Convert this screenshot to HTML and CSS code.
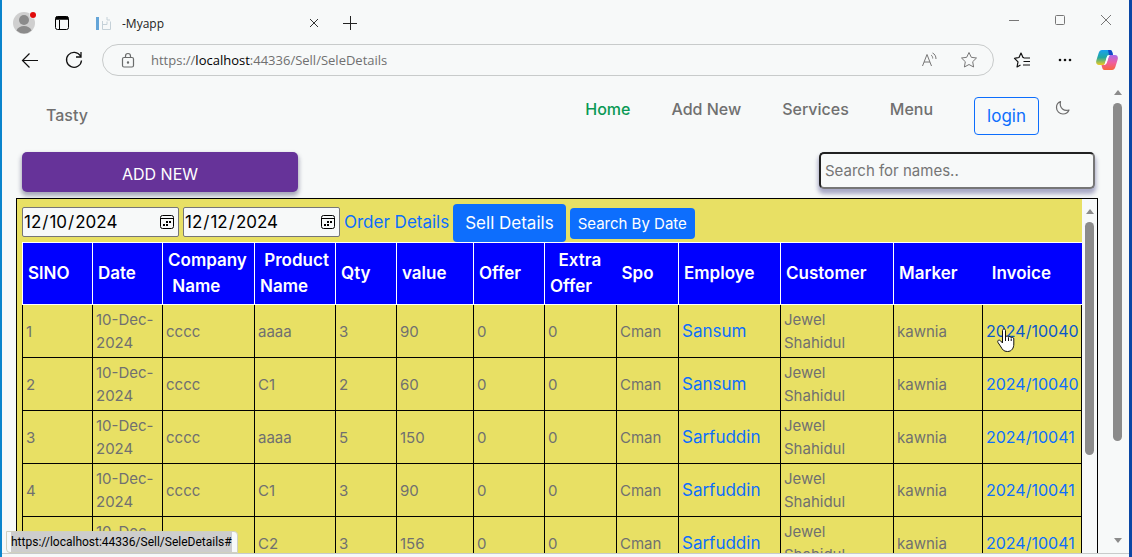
FILE: index.html
```html
<!DOCTYPE html>
<html lang="en">
<head>
    <meta charset="UTF-8">
    <meta name="viewport" content="width=device-width, initial-scale=1.0">
    <title>-Myapp</title>
    <link rel="stylesheet" href="styles.css">
</head>
<body>
    <div class="window">
        <!-- Tab strip -->
        <div class="tab-strip">
            <button class="icon-btn avatar" aria-label="Profile">
                <svg width="24" height="24" viewBox="0 0 24 24">
                    <circle cx="11" cy="13" r="11" fill="#cfcfcf"/>
                    <circle cx="11" cy="10" r="5" fill="#8b8b8b"/>
                    <path d="M3.5 20.5C4.500 17.500 7.500 16 11 16s6.500 1.500 7.500 4.500A11 11 0 0 1 3.500 20.500z" fill="#8b8b8b"/>
                    <circle cx="20" cy="5" r="3.500" fill="#f7f8f8"/>
                    <circle cx="20" cy="5" r="3" fill="#e00b0b"/>
                </svg>
            </button>
            <button class="icon-btn workspaces" aria-label="Tab actions">
                <svg width="16" height="16" viewBox="0 0 16 16" fill="none" stroke="#000">
                    <rect x="1.500" y="1.500" width="13" height="13" rx="2"/>
                    <path d="M1.500 4h13M5.500 5v9.500"/>
                    <path d="M2 3h12" stroke-width="3"/>
                </svg>
            </button>
            <div class="tab">
                <svg width="16" height="16" viewBox="0 0 16 16">
                    <rect x="0" y="2" width="3" height="13" fill="#64a5d8"/>
                    <path d="M6.500 6v8.500h8V6.500M7 9.500h4v-3M11 2v3h3" fill="none" stroke="#c5d1d8"/>
                </svg>
                <span class="tab-title">-Myapp</span>
                <button class="icon-btn" aria-label="Close tab">
                    <svg width="10" height="10" viewBox="0 0 10 10" fill="none" stroke="#333">
                        <path d="M1 1l8 8M9 1l-8 8"/>
                    </svg>
                </button>
            </div>
            <button class="icon-btn new-tab" aria-label="New tab">
                <svg width="14" height="14" viewBox="0 0 14 14" fill="none" stroke="#222">
                    <path d="M7.500 0v14M0 7.500h14"/>
                </svg>
            </button>
            <div class="window-controls">
                <button class="icon-btn" aria-label="Minimize">
                    <svg width="12" height="12" viewBox="0 0 12 12" stroke="#777"><path d="M1 6.500h10"/></svg>
                </button>
                <button class="icon-btn" aria-label="Maximize">
                    <svg width="12" height="12" viewBox="0 0 12 12" fill="none" stroke="#777"><rect x="1.500" y="1.500" width="9" height="9" rx="1"/></svg>
                </button>
                <button class="icon-btn" aria-label="Close">
                    <svg width="12" height="12" viewBox="0 0 12 12" stroke="#777"><path d="M1 1l10 10M11 1L1 11"/></svg>
                </button>
            </div>
        </div>

        <!-- Toolbar -->
        <div class="toolbar">
            <button class="icon-btn" aria-label="Back">
                <svg width="18" height="18" viewBox="0 0 18 18" fill="none" stroke="#111" stroke-width="1.200">
                    <path d="M17 9.500H2M8.500 2.500L1.500 9.500l7 7"/>
                </svg>
            </button>
            <button class="icon-btn refresh" aria-label="Refresh">
                <svg width="18" height="18" viewBox="0 0 18 18" fill="none" stroke="#111" stroke-width="1.300">
                    <path d="M15.500 5A7.500 7.500 0 1 0 16.500 9.500M16 1v5h-5"/>
                </svg>
            </button>
            <div class="address-bar">
                <svg width="14" height="16" viewBox="0 0 14 16" fill="none" stroke="#6a6c6c" stroke-width="1.200">
                    <rect x="1.500" y="5.500" width="11" height="9.500" rx="1.500"/>
                    <path d="M4.500 5.500V4a2.500 2.500 0 0 1 5 0v1.500"/>
                    <circle cx="7" cy="10.500" r=".6" fill="#6a6c6c"/>
                </svg>
                <span class="url">https://<b>localhost</b>:44336/Sell/SeleDetails</span>
                <button class="icon-btn" aria-label="Read aloud">
                    <svg width="17" height="16" viewBox="0 0 17 16" fill="none" stroke="#777">
                        <path d="M1.500 14L6 2.500 10.500 14M3 10h6M10 3c1.200.8 1.700 1.800 1.700 3.500M11.500 1c2.200 1 3.500 3 3.500 6"/>
                    </svg>
                </button>
                <button class="icon-btn" aria-label="Add to favorites">
                    <svg width="18" height="18" viewBox="0 0 18 18" fill="none" stroke="#777" stroke-linejoin="round">
                        <path d="M9 1.500l2.300 4.800 5.200.7-3.800 3.700.9 5.300L9 13.500 4.400 16l.9-5.300L1.500 7l5.200-.7z"/>
                    </svg>
                </button>
            </div>
            <button class="icon-btn favorites" aria-label="Favorites">
                <svg width="18" height="18" viewBox="0 0 18 18" fill="none" stroke="#111" stroke-width="1.200" stroke-linejoin="round">
                    <path d="M11 6.500H10L8 2 6 6.500l-4.500.8L5 10.800 4 16l3.500-2M10.500 7h6.500M10.500 10.500H17M10 14h7"/>
                </svg>
            </button>
            <button class="icon-btn" aria-label="Settings and more">
                <svg width="16" height="16" viewBox="0 0 16 16" fill="#111">
                    <circle cx="3" cy="8" r="1.300"/><circle cx="8" cy="8" r="1.300"/><circle cx="13" cy="8" r="1.300"/>
                </svg>
            </button>
            <button class="icon-btn copilot" aria-label="Copilot">
                <svg width="22" height="20" viewBox="0 0 22 20">
                    <defs>
                        <linearGradient id="cool" x1="0" y1="0" x2="0" y2="1">
                            <stop offset="0" stop-color="#18a0f0"/><stop offset=".5" stop-color="#22a8a0"/><stop offset="1" stop-color="#f2cb1d"/>
                        </linearGradient>
                        <linearGradient id="warm" x1="0" y1="0" x2="0" y2="1">
                            <stop offset="0" stop-color="#a86bea"/><stop offset=".5" stop-color="#ef5fa0"/><stop offset="1" stop-color="#f9663c"/>
                        </linearGradient>
                    </defs>
                    <path d="M6 0h8c1.500 0 2 1 2.500 3l.5 2h-3c-2 0-3 1-3.500 3l-1.500 5c-.5 1.500-1 2-2.500 2H3c-2.500 0-3.500-2-2.500-5l2-6.500C3.200 1.200 4 0 6 0z" fill="url(#cool)"/>
                    <path d="M12 0h2c1.500 0 2 1 2.500 3l.5 2h-4z" fill="#1448c8"/>
                    <path d="M16 20H8.500C7 20 6.500 19 6 17l-.5-2h2c2 0 3-1 3.500-3l1.500-5c.5-1.500 1-2 2.500-2h4c2.500 0 3.500 2 2.500 5l-2 6.500c-.700 2.300-1.500 3.500-3.500 3.500z" fill="url(#warm)"/>
                    <path d="M11.500 5.500h2.500c-1 .5-1.200 1-1.500 2L11 12c-.5 1.500-1.200 2.500-3 2.700 1-.5 1-1 1.300-1.900l1.400-5c.2-.8.400-1.700.8-2.300z" fill="#fff"/>
                </svg>
            </button>
        </div>

        <!-- Web page -->
        <div class="viewport">
            <div class="page">
                <header class="navbar">
                    <a href="#" class="brand">Tasty</a>
                    <nav class="nav-links">
                        <a href="#" class="active">Home</a>
                        <a href="#">Add New</a>
                        <a href="#">Services</a>
                        <a href="#">Menu</a>
                        <button class="login-btn">login</button>
                    </nav>
                    <button class="icon-btn theme-btn" aria-label="Dark mode">
                        <svg width="16" height="16" viewBox="0 0 16 16" fill="none" stroke="#6c6c6c" stroke-width="1.200" stroke-linejoin="round">
                            <path d="M5.500 1.500C3 2.500 1.500 4.800 1.500 7.500c0 3.800 3 6.500 6.500 6.500 2.800 0 5-1.500 6-4-4.500 1.500-10-1.500-8.500-8.500z"/>
                        </svg>
                    </button>
                </header>

                <div class="actions">
                    <button class="add-btn">ADD NEW</button>
                    <input type="text" class="search-box" placeholder="Search for names.." aria-label="Search for names">
                </div>

                <div class="table-box">
                    <div class="table-scroll">
                        <div class="filters">
                            <input type="date" value="2024-12-10" aria-label="From date">
                            <input type="date" value="2024-12-12" aria-label="To date">
                            <a href="#">Order Details</a>
                            <button class="btn">Sell Details</button>
                            <button class="btn btn-small">Search By Date</button>
                        </div>
                        <table>
                            <colgroup>
                                <col class="w-slno"><col class="w-date"><col class="w-company"><col class="w-product">
                                <col class="w-qty"><col class="w-value"><col class="w-offer"><col class="w-extra">
                                <col class="w-spo"><col class="w-employe"><col class="w-customer"><col class="w-marker">
                                <col class="w-invoice">
                            </colgroup>
                            <thead>
                                <tr>
                                    <th>SlNO</th>
                                    <th>Date</th>
                                    <th>Company<br>&nbsp;Name</th>
                                    <th>&nbsp;Product<br>Name</th>
                                    <th>Qty</th>
                                    <th>value</th>
                                    <th>Offer</th>
                                    <th>&nbsp;&nbsp;Extra<br>Offer</th>
                                    <th class="no-line">Spo</th>
                                    <th>Employe</th>
                                    <th>Customer</th>
                                    <th>Marker</th>
                                    <th class="no-line">&nbsp;Invoice</th>
                                </tr>
                            </thead>
                            <tbody>
                                <tr>
                                    <td>1</td><td>10-Dec-<br>2024</td><td>cccc</td><td>aaaa</td><td>3</td><td>90</td><td>0</td><td>0</td><td>Cman</td>
                                    <td><a href="#">Sansum</a></td><td>Jewel<br>Shahidul</td><td>kawnia</td>
                                    <td class="invoice hovered">
                                        <a href="#">2024/10040</a>
                                        <svg class="pointer" width="19" height="25" viewBox="0 0 19 25" fill="#fff" stroke="#111" stroke-linejoin="round">
                                            <path d="M5.500 15V2.500c0-2 3-2 3 0V9c.5-1.500 3-1.300 3 .3.500-1.300 2.700-1 2.700.6.700-1 2.600-.7 2.600 1V16c0 4-2 7.500-6.300 7.500-4 0-5-2-6.500-4.500L1 14.500c-1-2 1-3.200 2.500-1.700z"/>
                                            <path d="M8.500 9v4M11.500 9.500V13M14.200 10.500V13" fill="none"/>
                                        </svg>
                                    </td>
                                </tr>
                                <tr>
                                    <td>2</td><td>10-Dec-<br>2024</td><td>cccc</td><td>C1</td><td>2</td><td>60</td><td>0</td><td>0</td><td>Cman</td>
                                    <td><a href="#">Sansum</a></td><td>Jewel<br>Shahidul</td><td>kawnia</td><td class="invoice"><a href="#">2024/10040</a></td>
                                </tr>
                                <tr>
                                    <td>3</td><td>10-Dec-<br>2024</td><td>cccc</td><td>aaaa</td><td>5</td><td>150</td><td>0</td><td>0</td><td>Cman</td>
                                    <td><a href="#">Sarfuddin</a></td><td>Jewel<br>Shahidul</td><td>kawnia</td><td class="invoice"><a href="#">2024/10041</a></td>
                                </tr>
                                <tr>
                                    <td>4</td><td>10-Dec-<br>2024</td><td>cccc</td><td>C1</td><td>3</td><td>90</td><td>0</td><td>0</td><td>Cman</td>
                                    <td><a href="#">Sarfuddin</a></td><td>Jewel<br>Shahidul</td><td>kawnia</td><td class="invoice"><a href="#">2024/10041</a></td>
                                </tr>
                                <tr>
                                    <td></td><td>10-Dec-<br>2024</td><td></td><td>C2</td><td>3</td><td>156</td><td>0</td><td>0</td><td>Cman</td>
                                    <td><a href="#">Sarfuddin</a></td><td>Jewel<br>Shahidul</td><td>kawnia</td><td class="invoice"><a href="#">2024/10041</a></td>
                                </tr>
                            </tbody>
                        </table>
                    </div>
                    <div class="scrollbar scrollbar-inner">
                        <div class="arrow-up"></div>
                        <div class="thumb"></div>
                    </div>
                </div>
            </div>
            <div class="scrollbar scrollbar-page">
                <div class="arrow-up"></div>
                <div class="thumb"></div>
                <div class="arrow-down"></div>
            </div>
            <div class="status"><span>https://localhost:44336/Sell/SeleDetails#</span></div>
        </div>
    </div>
</body>
</html>
```
FILE: styles.css
```css
* {
    box-sizing: border-box;
}

body {
    margin: 0;
    height: 100vh;
    overflow: hidden;
    background-color: #f7f9f9;
    font-family: Inter, "Open Sans", sans-serif;
    font-size: 16px;
    color: #707070;
}

a {
    color: #0d6efd;
    text-decoration: none;
}

button,
input {
    font-family: inherit;
}

.window {
    display: flex;
    flex-direction: column;
    height: 100vh;
    padding-bottom: 3px;
    border-left: 2px solid #0a84cc;
    border-right: 3px solid #0a47a5;
}

.icon-btn {
    display: flex;
    flex: none;
    padding: 0;
    border: none;
    background: none;
}

/* Tab strip */
.tab-strip {
    display: flex;
    align-items: center;
    flex: none;
    height: 44px;
    padding: 2px 17px 0 11px;
    font-family: "Open Sans", sans-serif;
    font-size: 12px;
    color: #222;
}

.avatar {
    margin-top: -2px;
}

.workspaces {
    margin-left: 17px;
}

.tab {
    display: flex;
    align-items: center;
    width: 223px;
    margin-left: 26px;
}

.tab-title {
    flex: 1;
    margin-left: 10px;
}

.new-tab {
    margin-left: 24px;
}

.window-controls {
    display: flex;
    gap: 34px;
    margin: -6px 0 0 auto;
}

/* Toolbar */
.toolbar {
    display: flex;
    align-items: center;
    flex: none;
    height: 32px;
    padding: 0 11px 0 19px;
    gap: 26px;
}

.address-bar {
    display: flex;
    align-items: center;
    flex: 1;
    height: 32px;
    margin-left: -7px;
    padding: 0 15px 0 18px;
    border: 1px solid #c8cbcb;
    border-radius: 16px;
    font-family: "Open Sans", sans-serif;
    font-size: 13px;
}

.url {
    flex: 1;
    margin-left: 16px;
}

.url b {
    font-weight: normal;
    color: #000;
}

.address-bar .icon-btn {
    margin-left: 22px;
}

.favorites {
    margin-left: -7px;
}

.copilot {
    margin-left: -3px;
}

/* Web page */
.viewport {
    position: relative;
    display: flex;
    flex: 1;
    min-height: 0;
    border-bottom: 1px solid #c8cbcb;
}

.page {
    display: flex;
    flex-direction: column;
    flex: 1;
    min-width: 0;
    overflow: hidden;
    padding: 0 12px 0 14px;
}

.navbar {
    display: flex;
    align-items: flex-start;
    padding: 21px 27px 17px 30px;
    font-weight: 500;
    line-height: 24px;
}

.navbar a {
    color: #707070;
}

.navbar a.active {
    color: #0a9955;
}

.brand {
    margin-top: 6px;
}

.nav-links {
    display: flex;
    align-items: flex-start;
    gap: 41px;
    margin-left: auto;
}

.login-btn {
    height: 38px;
    padding: 0 12px;
    border: 1px solid #0d6efd;
    border-radius: 4px;
    background: none;
    color: #0d6efd;
    font-size: 17px;
}

.theme-btn {
    margin: 3px 0 0 16px;
}

.actions {
    display: flex;
    justify-content: space-between;
    align-items: flex-start;
    padding: 0 3px 6px 6px;
}

.add-btn {
    width: 276px;
    height: 40px;
    padding-top: 4px;
    border: none;
    border-radius: 5px;
    background-color: #663399;
    color: white;
    font-size: 16px;
    box-shadow: 0 3px 4px 1px rgba(50, 50, 93, 0.4);
}

.search-box {
    width: 276px;
    height: 37px;
    padding: 0 4px;
    border: 2px inset #767676;
    border-radius: 5px;
    background-color: #f7f9f9;
    font-size: 15px;
    box-shadow: 0 4px 4px 1px rgba(50, 50, 120, 0.4);
}

.table-box {
    display: flex;
    flex: 1;
    min-height: 0;
    border: 1px solid black;
    border-bottom: none;
}

.table-scroll {
    flex: 1;
    min-width: 0;
    overflow: hidden;
    padding: 5px 0 0 5px;
    background-color: #e8e064;
}

.filters {
    display: flex;
    align-items: center;
    gap: 4px;
    font-size: 17px;
}

.filters input {
    width: 157px;
    height: 30px;
    padding: 0;
    border: 1px solid #767676;
    border-radius: 2px;
    background-color: #f7f9f9;
    color: black;
    font-size: 17px;
}

.filters input,
.filters a {
    margin-bottom: 2px;
}

.filters input::-webkit-calendar-picker-indicator {
    width: 14px;
    height: 14px;
    margin-right: 4px;
    padding: 0;
    background: url("data:image/svg+xml,%3Csvg xmlns='http://www.w3.org/2000/svg' viewBox='0 0 14 14'%3E%3Crect x='.5' y='.5' width='13' height='13' rx='2' fill='none' stroke='black'/%3E%3Cpath d='M1 3.500h12' stroke='black'/%3E%3Cpath d='M6 7h2M9 7h2M3 10h2M6 10h2' stroke='black' stroke-width='2'/%3E%3C/svg%3E") center no-repeat;
}

.btn {
    height: 38px;
    padding: 0 12px;
    border: none;
    border-radius: 4px;
    background-color: #0d6efd;
    color: white;
    font-size: 17px;
}

.btn-small {
    height: 31px;
    padding: 0 8px;
    font-size: 15px;
}

/* Sales table */
table {
    width: 100%;
    table-layout: fixed;
    border-collapse: collapse;
    text-align: left;
}

.w-slno { width: 70px; }
.w-date { width: 70px; }
.w-company { width: 92px; }
.w-product { width: 81px; }
.w-qty { width: 61px; }
.w-value { width: 77px; }
.w-offer { width: 71px; }
.w-extra { width: 72px; }
.w-spo { width: 62px; }
.w-employe { width: 102px; }
.w-customer { width: 113px; }
.w-marker { width: 89px; }
.w-invoice { width: 99px; }

th {
    padding: 4px 4px 5px 5px;
    border: 1px solid white;
    border-right: none;
    background-color: blue;
    color: white;
    font-size: 17px;
    font-weight: 600;
    line-height: 26px;
    white-space: nowrap;
}

th.no-line {
    border-left: none;
}

td {
    padding: 3px;
    border: 1px solid black;
    font-size: 15px;
    line-height: 23px;
}

td a {
    font-size: 17px;
}

.invoice a {
    font-size: 16px;
}

.hovered {
    position: relative;
}

.hovered a {
    color: #0a58ca;
}

.pointer {
    position: absolute;
    left: 14px;
    top: 23px;
}

/* Scrollbars */
.scrollbar {
    display: flex;
    flex-direction: column;
    align-items: center;
    flex: none;
    background-color: #f7f9f9;
}

.scrollbar-inner {
    width: 15px;
    padding-top: 10px;
}

.scrollbar-page {
    width: 15px;
    margin-right: 4px;
    padding: 14px 0 10px;
}

.thumb {
    width: 9px;
    margin-top: 8px;
    border-radius: 5px;
    background-color: #8b8b8b;
}

.scrollbar-inner .thumb {
    height: 233px;
}

.scrollbar-page .thumb {
    height: 338px;
}

.arrow-up,
.arrow-down {
    border: 4px solid transparent;
}

.arrow-up {
    border-top: none;
    border-bottom: 5px solid #8b8b8b;
}

.arrow-down {
    margin-top: auto;
    border-bottom: none;
    border-top: 5px solid #8b8b8b;
}

/* Link address shown in the corner */
.status {
    position: absolute;
    left: 4px;
    bottom: 0;
    padding: 0 5px 0 4px;
    border: 1px solid #d0d0c0;
    border-radius: 0 4px 0 4px;
    background-color: #f7f9f9;
    color: black;
    font-family: Roboto, "Open Sans", sans-serif;
    font-size: 12px;
    line-height: 20px;
}

.status span {
    display: block;
    background-color: #cdcdcd;
}
```
